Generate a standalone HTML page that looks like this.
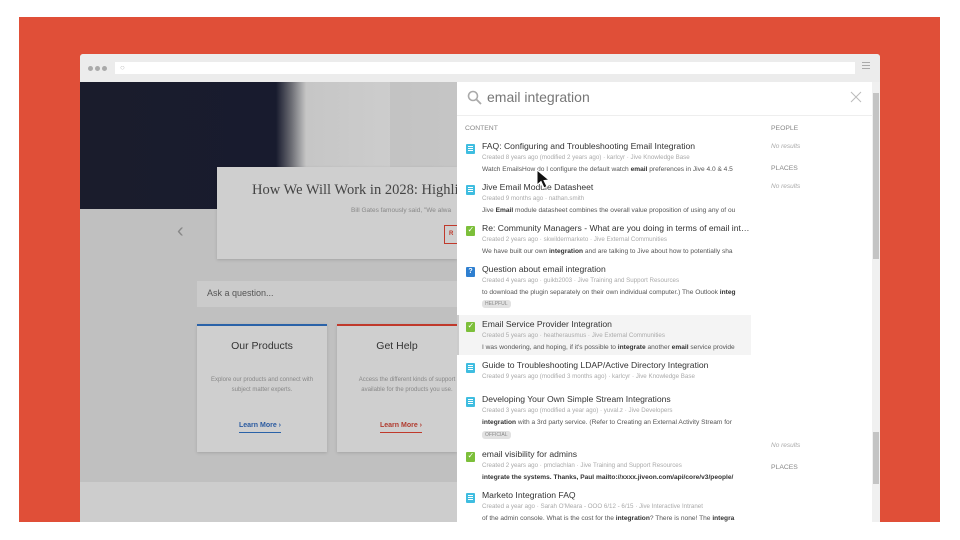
<!DOCTYPE html>
<html><head><meta charset="utf-8"><style>
*{margin:0;padding:0;box-sizing:border-box}
body{width:960px;height:540px;background:#fff;position:relative;overflow:hidden;font-family:"Liberation Sans",Arial,sans-serif}
.abs{position:absolute}
.org{left:19px;top:17px;width:921px;height:505px;background:#e04f38}
.win{left:80px;top:54px;width:800px;height:468px;background:#c0c0c0;border-radius:3px 3px 0 0;overflow:hidden}
.tb{left:0;top:0;width:800px;height:28px;background:#ececec}
.url{left:35px;top:8px;width:740px;height:12px;background:#fff}
.dot{top:12px;width:5px;height:5px;border-radius:50%;background:#aaa}
.hero{left:0;top:28px;width:377px;height:127px;background:linear-gradient(90deg,#1a1c2c 0%,#181b2e 52%,#6a6b72 56%,#c6c6c6 60%,#d2d2d2 100%)}
.card{background:#cfcfcf;box-shadow:0 1px 3px rgba(0,0,0,.15)}
.panel{left:377px;top:28px;width:415px;height:440px;background:#fff}
.t{position:absolute;left:25px;font-size:8.6px;color:#333;white-space:nowrap}
.m{position:absolute;left:25px;font-size:6.2px;color:#aaa;white-space:nowrap}
.s{position:absolute;left:25px;font-size:6.6px;color:#555;white-space:nowrap;width:268px;overflow:hidden}
.s b{color:#333}
.ic{position:absolute;left:9px;width:9px;height:10px;border-radius:1px}
.doc{background:#3fbde0}
.doc:after{content:"";position:absolute;left:2px;top:2px;width:5px;height:6px;background:repeating-linear-gradient(#fff 0 1px,transparent 1px 2px)}
.chk{background:#7cbf3a}
.chk:after{content:"✓";position:absolute;left:1.5px;top:-1px;font-size:8px;color:#fff}
.q{background:#2e7fd0;color:#fff;font-size:7px;text-align:center;line-height:10px;font-weight:bold}
.tag{position:absolute;left:25px;font-size:5px;color:#888;background:#e2e2e2;border-radius:3px;padding:1px 3px}
</style></head><body>
<div class="abs org"></div>
<div class="abs win">
 <div class="abs tb"></div>
 <div class="abs dot" style="left:8px"></div><div class="abs dot" style="left:15px"></div><div class="abs dot" style="left:22px"></div>
 <div class="abs url"></div>
 <div class="abs" style="left:40px;top:9px;font-size:8px;color:#bbb">○</div>
 <div class="abs" style="left:782px;top:8px;width:8px;height:7px;border-top:1px solid #aaa;border-bottom:1px solid #aaa"></div>
 <div class="abs" style="left:782px;top:11px;width:8px;height:1px;background:#aaa"></div>
 <div class="abs hero"></div>
 <div class="abs" style="left:310px;top:28px;width:67px;height:85px;background:#bdbdbd;opacity:.6"></div>
 <div class="abs card" style="left:137px;top:113px;width:240px;height:92px"></div>
 <div class="abs" style="left:172px;top:128px;font-family:'Liberation Serif',serif;font-size:14.5px;color:#444;white-space:nowrap">How We Will Work in 2028: Highli</div>
 <div class="abs" style="left:271px;top:153px;font-size:6.5px;color:#888;white-space:nowrap">Bill Gates famously said, "We alwa</div>
 <div class="abs" style="left:364px;top:171px;width:13px;height:19px;border:1.5px solid #c0392b;border-right:none;font-size:6px;color:#c0392b;padding:5px 0 0 4px;font-weight:bold">R</div>
 <div class="abs" style="left:97px;top:166px;font-size:20px;color:#888;font-weight:200">&lsaquo;</div>
 <div class="abs" style="left:117px;top:227px;width:260px;height:26px;background:#cbcbcb"></div>
 <div class="abs" style="left:127px;top:234px;font-size:9px;color:#555">Ask a question...</div>
 <div class="abs card" style="left:117px;top:270px;width:130px;height:128px;border-top:2px solid #2a62a8"></div>
 <div class="abs" style="left:117px;top:286px;width:130px;text-align:center;font-size:10.5px;color:#333">Our Products</div>
 <div class="abs" style="left:117px;top:321px;width:130px;text-align:center;font-size:6px;color:#888;line-height:10px">Explore our products and connect with<br>subject matter experts.</div>
 <div class="abs" style="left:159px;top:368px;font-size:7px;color:#2a5aa0;font-weight:bold;border-bottom:1.5px solid #2a62a8;padding-bottom:3px">Learn More &rsaquo;</div>
 <div class="abs card" style="left:257px;top:270px;width:120px;height:128px;border-top:2px solid #c0392b"></div>
 <div class="abs" style="left:257px;top:286px;width:120px;text-align:center;font-size:10.5px;color:#333">Get Help</div>
 <div class="abs" style="left:262px;top:321px;width:130px;text-align:center;font-size:6px;color:#888;line-height:10px">Access the different kinds of support<br>available for the products you use.</div>
 <div class="abs" style="left:300px;top:368px;font-size:7px;color:#b03a2e;font-weight:bold;border-bottom:1.5px solid #c0392b;padding-bottom:3px">Learn More &rsaquo;</div>
 <div class="abs" style="left:0;top:428px;width:377px;height:40px;background:#cdcdcd"></div>
 <div class="abs" style="left:792px;top:28px;width:8px;height:440px;background:#f0f0f0"></div>
 <div class="abs" style="left:793px;top:39px;width:6px;height:166px;background:#c4c4c4"></div>
 <div class="abs" style="left:793px;top:378px;width:6px;height:52px;background:#c4c4c4"></div>
 <div class="abs panel">
  <svg class="abs" style="left:10px;top:8px" width="16" height="16"><circle cx="6" cy="6" r="4.5" fill="none" stroke="#aaa" stroke-width="1.6"/><line x1="9.5" y1="9.5" x2="14" y2="14" stroke="#aaa" stroke-width="1.8"/></svg>
  <div class="abs" style="left:30px;top:7px;font-size:14px;color:#777">email integration</div>
  <svg class="abs" style="left:393px;top:9px" width="12" height="12"><path d="M1 1L11 11M11 1L1 11" stroke="#bbb" stroke-width="1"/></svg>
  <div class="abs" style="left:0;top:33px;width:415px;height:1px;background:#eee"></div>
  <div class="abs" style="left:8px;top:43px;font-size:6.8px;color:#888">CONTENT</div>
  <div class="abs" style="left:314px;top:43px;font-size:6.8px;color:#888">PEOPLE</div>
  <div class="abs" style="left:314px;top:61px;font-size:6.5px;color:#aaa;font-style:italic">No results</div>
  <div class="abs" style="left:314px;top:83px;font-size:6.8px;color:#888">PLACES</div>
  <div class="abs" style="left:314px;top:101px;font-size:6.5px;color:#aaa;font-style:italic">No results</div>
  <div class="abs" style="left:314px;top:360px;font-size:6.5px;color:#aaa;font-style:italic">No results</div>
  <div class="abs" style="left:314px;top:382px;font-size:6.8px;color:#888">PLACES</div>
  <div class="abs" style="left:0;top:233px;width:294px;height:40px;background:#f4f4f4;border-left:2px solid #ccc"></div>

  <div class="ic doc" style="top:62px"></div><div class="t" style="top:59px">FAQ: Configuring and Troubleshooting Email Integration</div>
  <div class="m" style="top:72px">Created 8 years ago (modified 2 years ago) · karlcyr · Jive Knowledge Base</div>
  <div class="s" style="top:84px">Watch EmailsHow do I configure the default watch <b>email</b> preferences in Jive 4.0 &amp; 4.5</div>

  <div class="ic doc" style="top:103px"></div><div class="t" style="top:100px">Jive Email Module Datasheet</div>
  <div class="m" style="top:113px">Created 9 months ago · nathan.smith</div>
  <div class="s" style="top:125px">Jive <b>Email</b> module datasheet combines the overall value proposition of using any of ou</div>

  <div class="ic chk" style="top:144px"></div><div class="t" style="top:141px">Re: Community Managers - What are you doing in terms of email int…</div>
  <div class="m" style="top:154px">Created 2 years ago · skwildermarketo · Jive External Communities</div>
  <div class="s" style="top:166px">We have built our own <b>integration</b> and are talking to Jive about how to potentially sha</div>

  <div class="ic q" style="top:185px">?</div><div class="t" style="top:182px">Question about email integration</div>
  <div class="m" style="top:195px">Created 4 years ago · guikb2003 · Jive Training and Support Resources</div>
  <div class="s" style="top:207px">to download the plugin separately on their own individual computer.) The Outlook <b>integ</b></div>
  <div class="tag" style="top:218px">HELPFUL</div>

  <div class="ic chk" style="top:240px"></div><div class="t" style="top:237px">Email Service Provider Integration</div>
  <div class="m" style="top:250px">Created 5 years ago · heatherausmus · Jive External Communities</div>
  <div class="s" style="top:262px">I was wondering, and hoping, if it's possible to <b>integrate</b> another <b>email</b> service provide</div>

  <div class="ic doc" style="top:281px"></div><div class="t" style="top:278px">Guide to Troubleshooting LDAP/Active Directory Integration</div>
  <div class="m" style="top:291px">Created 9 years ago (modified 3 months ago) · karlcyr · Jive Knowledge Base</div>

  <div class="ic doc" style="top:315px"></div><div class="t" style="top:312px">Developing Your Own Simple Stream Integrations</div>
  <div class="m" style="top:325px">Created 3 years ago (modified a year ago) · yuval.z · Jive Developers</div>
  <div class="s" style="top:337px"><b>integration</b> with a 3rd party service. (Refer to Creating an External Activity Stream for</div>
  <div class="tag" style="top:349px">OFFICIAL</div>

  <div class="ic chk" style="top:370px"></div><div class="t" style="top:367px">email visibility for admins</div>
  <div class="m" style="top:380px">Created 2 years ago · pmclachlan · Jive Training and Support Resources</div>
  <div class="s" style="top:392px"><b>integrate the systems. Thanks, Paul mailto://xxxx.jiveon.com/api/core/v3/people/</b></div>

  <div class="ic doc" style="top:411px"></div><div class="t" style="top:408px">Marketo Integration FAQ</div>
  <div class="m" style="top:421px">Created a year ago · Sarah O'Meara - OOO 6/12 - 6/15 · Jive Interactive Intranet</div>
  <div class="s" style="top:433px">of the admin console. What is the cost for the <b>integration</b>? There is none! The <b>integra</b></div>

  <svg class="abs" style="left:78px;top:87px" width="22" height="22"><path d="M2 1L2 16L6 12.5L9 19L12 17.5L9 11.5L14 11Z" fill="#111" stroke="#fff" stroke-width="1"/></svg>
 </div>
</div>
</body></html>
